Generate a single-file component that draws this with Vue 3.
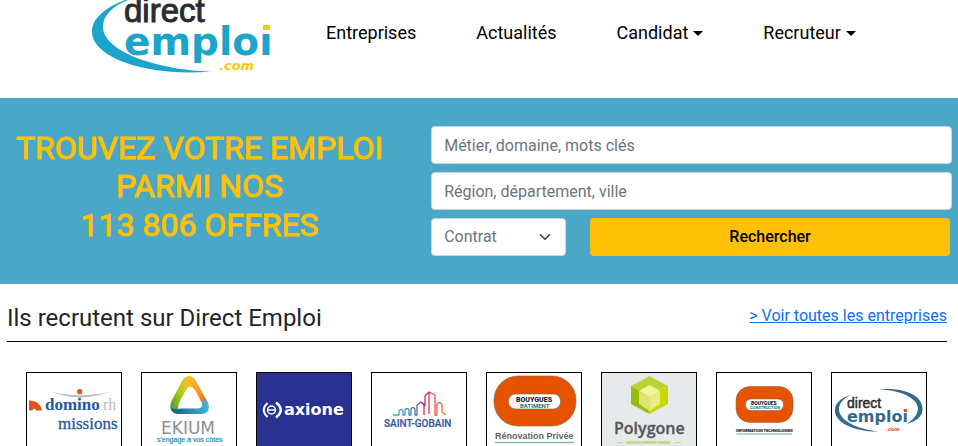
<script setup>
import { ref } from 'vue'

const job = ref('')
const place = ref('')
const contract = ref('')

const menu = [
  { label: 'Entreprises', dropdown: false },
  { label: 'Actualités', dropdown: false },
  { label: 'Candidat', dropdown: true },
  { label: 'Recruteur', dropdown: true },
]
const contracts = ['CDI', 'CDD', 'Stage', 'Alternance']
</script>

<template>
  <header class="header">
    <a href="#" class="brand" aria-label="Direct Emploi">
      <svg width="184" height="76" viewBox="90 0 184 76">
        <path fill="#1ba5cc" d="M125 0C102 9 92 20 92 32C92 56 142 77 211 71.500C156 70 103 51 103 27C103 15 113 6 128 0Z" />
        <text class="brand-direct" x="124" y="22">direct</text>
        <text class="brand-emploi" x="124" y="55">emploi</text>
        <rect x="261" y="22" width="12" height="10" fill="#fff" />
        <rect x="263" y="25" width="7" height="5" fill="#fdc50f" />
        <text class="brand-com" x="219" y="70">.com</text>
      </svg>
    </a>
    <nav class="menu">
      <a v-for="item in menu" :key="item.label" href="#" class="menu-link">
        {{ item.label }}<span v-if="item.dropdown" class="caret"></span>
      </a>
    </nav>
  </header>

  <section class="hero">
    <h1 class="hero-title">TROUVEZ VOTRE EMPLOI<br />PARMI NOS<br />113 806 OFFRES</h1>
    <form class="search" @submit.prevent>
      <input v-model="job" class="field" type="text" aria-label="Métier, domaine, mots clés" placeholder="Métier, domaine, mots clés" />
      <input v-model="place" class="field" type="text" aria-label="Région, département, ville" placeholder="Région, département, ville" />
      <div class="search-row">
        <div class="select-box">
          <select v-model="contract" class="field select" aria-label="Contrat">
            <option value="">Contrat</option>
            <option v-for="c in contracts" :key="c" :value="c">{{ c }}</option>
          </select>
          <svg class="chevron" width="16" height="12" viewBox="0 0 16 16">
            <path fill="none" stroke="#343a40" stroke-width="2" stroke-linecap="round" stroke-linejoin="round" d="m2 5 6 6 6-6" />
          </svg>
        </div>
        <button class="submit" type="submit">Rechercher</button>
      </div>
    </form>
  </section>

  <main class="companies">
    <div class="companies-head">
      <h2 class="companies-title">Ils recrutent sur Direct Emploi</h2>
      <a href="#" class="all-link">&gt; Voir toutes les entreprises</a>
    </div>
    <div class="logos">
      <a href="#" class="card" aria-label="Domino RH Missions">
        <svg viewBox="1 1 94 94">
          <path fill="#e2521b" d="M3 38.500V28.500C10 28.500 15 32 16 38.500H10C9.500 36 7 36 6.500 38.500Z" />
          <path fill="#b9bbbf" d="M24 19.500Q54 31 85 19.500Q54 27 24 19.500Z" />
          <path fill="#b9bbbf" d="M52 24h4l-1 4h-2z" />
          <circle cx="53.700" cy="19.700" r="2.600" fill="#e2521b" />
          <text class="serif" x="19" y="38" font-size="17" font-weight="700" fill="#2659a0">domino</text>
          <text class="serif" x="77" y="38" font-size="16" fill="#b9bbbf">rh</text>
          <text class="serif" x="32" y="57" font-size="17" fill="#2659a0" stroke="#2659a0" stroke-width=".3">missions</text>
        </svg>
      </a>

      <a href="#" class="card" aria-label="Ekium">
        <svg viewBox="1 1 94 94">
          <defs>
            <linearGradient id="ek-left" x1="0" y1="1" x2="1" y2="0"><stop offset="0" stop-color="#3f8e35" /><stop offset=".5" stop-color="#a9c61c" /><stop offset="1" stop-color="#d8d823" /></linearGradient>
            <linearGradient id="ek-right" x1="0" y1="0" x2="1" y2="1"><stop offset="0" stop-color="#f9cf25" /><stop offset=".6" stop-color="#ef9226" /><stop offset="1" stop-color="#d4481f" /></linearGradient>
            <linearGradient id="ek-base"><stop offset="0" stop-color="#0d5a84" /><stop offset="1" stop-color="#45b9d5" /></linearGradient>
          </defs>
          <path fill="url(#ek-left)" d="M49 4Q44 4 41 9L31 28Q27 36 32 40L42 42Q35 37 38 31L46 16Q49 11 49 4Z" />
          <path fill="url(#ek-right)" d="M47 4Q52 4 55 9L66 29Q69 35 66 39L61 31L54 18Q50 12 46 16L42 23L43 12Q45 6 47 4Z" />
          <path fill="url(#ek-base)" d="M30 36Q34 38 40 36.500L57 36.500Q62 36 61 31L65 27L67 31Q70 42 60 42H38Q31 42 30 36Z" />
          <text class="wide" x="20" y="62" font-size="17" fill="#8a8e91">EKIUM</text>
          <text class="sans" x="16" y="70" font-size="7" fill="#258fb5" stroke="#258fb5" stroke-width=".2">s'engage à vos côtés</text>
        </svg>
      </a>

      <a href="#" class="card" aria-label="Axione">
        <svg viewBox="1 1 94 94">
          <rect width="96" height="96" fill="#293290" />
          <g fill="none" stroke="#fff">
            <path stroke-width="2" d="M11.500 31Q4 38 11.500 45" />
            <path stroke-width="2.500" d="M20 30.500Q29.500 38 20 45.500" />
            <circle cx="15.500" cy="38" r="4" stroke-width="1.500" />
            <path stroke-width="1.500" d="M12 38h7" />
          </g>
          <text class="wide" x="28" y="43" font-size="16" font-weight="700" fill="#fff">axione</text>
        </svg>
      </a>

      <a href="#" class="card" aria-label="Saint-Gobain">
        <svg viewBox="1 1 94 94">
          <defs>
            <linearGradient id="sg" gradientUnits="userSpaceOnUse" x1="22" y1="0" x2="75" y2="0"><stop offset="0" stop-color="#46b6b2" /><stop offset=".35" stop-color="#3d80bd" /><stop offset=".5" stop-color="#6e548f" /><stop offset=".62" stop-color="#dc2858" /><stop offset=".8" stop-color="#ec5042" /><stop offset="1" stop-color="#f28331" /></linearGradient>
          </defs>
          <path fill="none" stroke="url(#sg)" stroke-width="1.300" stroke-linejoin="round" d="M22 43H28V39Q30 36 32 39V43H34V38Q36 35 38 38V43H40V37Q42 34 44 37V43H46V33L50 30L53 32V43M50 30L54 34V24L58 20V42M58 20L64 23V43H66V32Q69 29 71 33V40L75 43" />
          <text class="roboto" x="13" y="55" font-size="10" font-weight="500" fill="#36569e" stroke="#36569e" stroke-width=".2">SAINT-GOBAIN</text>
        </svg>
      </a>

      <a href="#" class="card" aria-label="Bouygues Bâtiment Rénovation Privée">
        <svg viewBox="1 1 94 94">
          <rect x="8" y="4" width="82" height="50" rx="24" fill="#e65300" stroke="#75655e" stroke-width=".6" />
          <rect x="22.500" y="22" width="52" height="15" rx="7" fill="#fff" stroke="#75655e" stroke-width=".6" />
          <text class="roboto" x="30" y="30" font-size="7" font-weight="900" fill="#222">BOUYGUES</text>
          <text class="roboto" x="34" y="36" font-size="6" font-weight="700" fill="#168064">BATIMENT</text>
          <text class="sans" x="9" y="67" font-size="9" font-weight="700" fill="#626467">Rénovation Privée</text>
          <path stroke="#7dbd9f" stroke-width="1.500" d="M9 70.500h79" />
        </svg>
      </a>

      <a href="#" class="card" aria-label="Polygone">
        <svg viewBox="1 1 94 94">
          <rect width="96" height="96" fill="#e6eaeb" />
          <path fill="#b9d432" d="M48.500 4 67 14 48.500 24 30 14Z" />
          <path fill="#93be0c" d="M30 14 48.500 24V42L30 32Z" />
          <path fill="#c6d800" d="M67 14 48.500 24V42L67 32Z" />
          <path fill="#f2f4a4" d="M48.500 13 59 19 48.500 25 38 19Z" />
          <path fill="#dce56b" d="M38 19 48.500 25V39L38 32Z" />
          <path fill="#e7ec83" d="M59 19 48.500 25V39L59 32Z" />
          <text class="open" x="13" y="62" font-size="16" font-weight="600" fill="#54585c" stroke="#54585c" stroke-width=".3">Polygone</text>
          <path stroke="#c8d84e" stroke-width=".8" d="M16 70.500h6M74 70.500h6" />
          <text class="roboto" x="25" y="72" font-size="3" font-weight="700" fill="#b5cc2a">CRÉATEUR D'ÉNERGIE HUMAINE</text>
        </svg>
      </a>

      <a href="#" class="card" aria-label="Bouygues Construction Information Technologies">
        <svg viewBox="1 1 94 94">
          <rect x="20" y="14.500" width="57" height="36" rx="14" fill="#e65300" stroke="#75655e" stroke-width=".5" />
          <rect x="29.500" y="27" width="38" height="11.500" rx="5.500" fill="#fff" stroke="#75655e" stroke-width=".5" />
          <text class="roboto" x="35" y="32.500" font-size="5" font-weight="900" fill="#222">BOUYGUES</text>
          <text class="roboto" x="34" y="37" font-size="4" font-weight="700" fill="#168064">CONSTRUCTION</text>
          <text class="roboto" x="20" y="60" font-size="4" font-weight="700" fill="#37393b" stroke="#37393b" stroke-width=".2">INFORMATION TECHNOLOGIES</text>
          <path stroke="#65ad8c" stroke-width="1" d="M20.500 62h55.500" />
        </svg>
      </a>

      <a href="#" class="card" aria-label="Direct Emploi">
        <svg viewBox="1 1 94 94">
          <path fill="#32698f" d="M22 22C8 26 3 33 4 40C6 52 25 60 48 59.500C24 57 9 48 8 38C7.500 32 12 26 22 22Z" />
          <path fill="#32698f" d="M48 17.500C74 15 91 24 91.500 36C92 44 86 49 76 52C83 47 87 42 87 36C86 26 70 18 48 17.500Z" />
          <text class="sans" x="16" y="36" font-size="14" fill="#2d2e30" stroke="#2d2e30" stroke-width=".5">direct</text>
          <text class="wide" x="16" y="50" font-size="16" font-weight="700" fill="#32698f">emploi</text>
          <rect x="72" y="36.500" width="5" height="4.300" fill="#fff" />
          <rect x="72.800" y="37" width="3" height="3" fill="#e2431f" />
          <text class="wide" x="55" y="59" font-size="5" font-weight="700" font-style="italic" fill="#e2431f">.com</text>
        </svg>
      </a>
    </div>
  </main>
</template>

<style>
html {
  scrollbar-width: none;
}
body {
  margin: 0;
  background: #fff;
  color: #212529;
  font-family: Roboto, "Liberation Sans", sans-serif;
  font-size: 16px;
  line-height: 1.5;
}
</style>

<style scoped>
.header {
  display: flex;
  align-items: flex-start;
  gap: 52px;
  padding: 0 90px 22px;
}
.brand {
  flex: none;
}
.brand svg,
.card svg {
  display: block;
}
.brand-direct {
  font: 400 33px "Liberation Sans", sans-serif;
  fill: #2b2c2e;
  stroke: #2b2c2e;
  stroke-width: 1px;
}
.brand-emploi {
  font: 700 39px "DejaVu Sans", sans-serif;
  fill: #1ba5cc;
}
.brand-com {
  font: italic 700 13px "DejaVu Sans", sans-serif;
  fill: #fdc50f;
}
.menu {
  display: flex;
  gap: 60px;
  padding-top: 19px;
}
.menu-link {
  color: #000;
  font-size: 18px;
  line-height: 27px;
  text-decoration: none;
  white-space: nowrap;
}
.caret {
  display: inline-block;
  margin-left: 5px;
  vertical-align: 3px;
  border: 5px solid transparent;
  border-top-color: #000;
  border-bottom: 0;
}
.hero {
  display: grid;
  grid-template-columns: 5fr 7fr;
  align-items: start;
  padding: 28px 0;
  background: #4aa7c5;
}
.hero-title {
  margin: 0;
  padding-top: 3px;
  color: #ffc107;
  font-size: 32px;
  font-weight: 400;
  line-height: 1.2;
  text-align: center;
  white-space: nowrap;
  -webkit-text-stroke: 1px #ffc107;
}
.search {
  display: grid;
  gap: 8px;
  padding: 0 6px 0 32px;
}
.field {
  box-sizing: border-box;
  width: 100%;
  height: 38px;
  padding: 6px 12px;
  border: 1px solid #ced4da;
  border-radius: 4px;
  background: #fff;
  color: #6c757d;
  font: inherit;
}
.field::placeholder {
  color: #6c757d;
  opacity: 1;
}
.search-row {
  display: grid;
  grid-template-columns: 3fr 8fr;
  gap: 24px;
  padding-right: 2px;
}
.select-box {
  position: relative;
}
.select {
  display: block;
  appearance: none;
}
.chevron {
  position: absolute;
  top: 13px;
  right: 13px;
  pointer-events: none;
}
.submit {
  height: 38px;
  border: 0;
  border-radius: 4px;
  background: #ffc107;
  color: #000;
  font: inherit;
  font-weight: 500;
}
.companies {
  padding: 16px 11px 0 7px;
}
.companies-head {
  display: flex;
  justify-content: space-between;
  padding-bottom: 5px;
  border-bottom: 1px solid #000;
}
.companies-title {
  margin: 0;
  font-size: 24px;
  font-weight: 400;
  line-height: 36px;
}
.all-link {
  color: #0d6efd;
  line-height: 32px;
}
.logos {
  display: flex;
  justify-content: space-between;
  padding: 30px 20px 0 19px;
}
.card {
  box-sizing: border-box;
  width: 96px;
  height: 96px;
  border: 1px solid #000;
  overflow: hidden;
}
.serif {
  font-family: "Liberation Serif", serif;
}
.sans {
  font-family: "Liberation Sans", sans-serif;
}
.wide {
  font-family: "DejaVu Sans", sans-serif;
}
.roboto {
  font-family: Roboto, sans-serif;
}
.open {
  font-family: "Open Sans", sans-serif;
}
</style>
